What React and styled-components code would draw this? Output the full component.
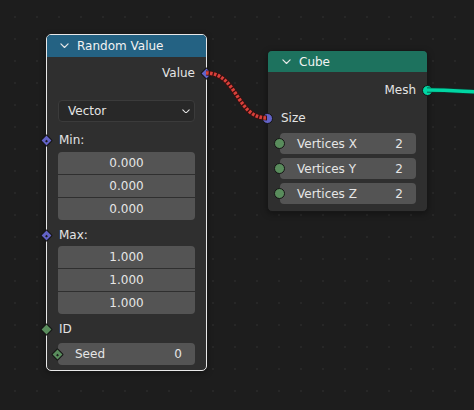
import React from "react";
import styled, { createGlobalStyle } from "styled-components";

const GlobalStyle = createGlobalStyle`
  html, body {
    margin: 0;
    padding: 0;
    background: #1d1d1d;
  }
  body {
    font-family: "DejaVu Sans", "Liberation Sans", sans-serif;
  }
`;

const Canvas = styled.div`
  position: relative;
  width: 474px;
  height: 410px;
  overflow: hidden;
  background-color: #1d1d1d;
  background-image: radial-gradient(circle, #272727 0.9px, transparent 1.4px);
  background-size: 22px 22px;
  background-position: 4px 6px;
`;

const Links = styled.svg`
  position: absolute;
  left: 0;
  top: 0;
  width: 474px;
  height: 410px;
  pointer-events: none;
`;

const Node = styled.div`
  position: absolute;
  left: ${p => p.x}px;
  top: ${p => p.y}px;
  width: ${p => p.w}px;
  box-sizing: border-box;
  background: #2f2f2f;
  border: 1px solid ${p => (p.selected ? "#e8e8e8" : "#171717")};
  border-radius: 5px;
  color: #e4e4e4;
  font-size: 12px;
  box-shadow: 0 2px 6px rgba(0, 0, 0, 0.35);
`;

const Header = styled.div`
  height: ${p => p.h}px;
  background: ${p => p.color};
  border-radius: 4px 4px 0 0;
  display: flex;
  align-items: center;
  padding-left: ${p => p.pad}px;
  gap: 8px;
  color: #f2f2f2;
  font-size: 12px;
`;

const Body = styled.div`
  display: flex;
  flex-direction: column;
  padding: ${p => p.top}px 0 ${p => p.bottom}px;
`;

const Row = styled.div`
  position: relative;
  height: 20px;
  display: flex;
  align-items: center;
  justify-content: ${p => (p.out ? "flex-end" : "flex-start")};
  padding: 0 11px 0 ${p => p.padLeft || 12}px;
  margin-top: ${p => p.mt || 0}px;
`;

const FieldRow = styled.div`
  position: relative;
  display: flex;
  margin: ${p => p.mt || 0}px 11px 0 ${p => p.ml || 11}px;
`;

const Socket = styled.span`
  position: absolute;
  top: 50%;
  ${p => (p.out ? "right: -5px;" : "left: -6px;")}
  width: ${p => (p.round ? 11 : 9)}px;
  height: ${p => (p.round ? 11 : 9)}px;
  margin-top: ${p => (p.round ? -5.5 : -4.5)}px;
  ${p => (p.out ? "margin-right: " + (p.round ? -0.5 : 0.5) + "px;" : "margin-left: " + (p.round ? -0.5 : 0.5) + "px;")}
  box-sizing: border-box;
  background: ${p => p.color};
  border: 1px solid #141414;
  border-radius: ${p => (p.round ? "50%" : "1px")};
  transform: ${p => (p.round ? "none" : "rotate(45deg)")};
  display: flex;
  align-items: center;
  justify-content: center;
  &::after {
    content: "";
    display: ${p => (p.dot ? "block" : "none")};
    width: 2px;
    height: 2px;
    background: #1c1c1c;
  }
`;

const Dropdown = styled.div`
  height: 22px;
  margin: 17px 11px 0 11px;
  box-sizing: border-box;
  background: #282828;
  border: 1px solid #3b3b3b;
  border-radius: 4px;
  display: flex;
  align-items: center;
  justify-content: space-between;
  padding: 0 4px 0 9px;
`;

const FieldGroup = styled.div`
  display: flex;
  flex-direction: column;
  gap: 1px;
  margin: ${p => p.mt}px 11px 0 11px;
`;

const Field = styled.div`
  flex-grow: 1;
  flex-shrink: 0;
  height: ${p => p.h || 21}px;
  background: #545454;
  border-radius: ${p => p.radius || "4px"};
  display: flex;
  align-items: center;
  justify-content: ${p => (p.center ? "center" : "space-between")};
  padding: 0 ${p => (p.center ? 0 : 13)}px 0 ${p => (p.center ? 0 : 17)}px;
  color: #e6e6e6;
`;

const Chevron = ({ size = 9, color = "#e8e8e8" }) => (
  <svg width={size} height={size * 0.6} viewBox="0 0 10 6">
    <polyline points="1,1 5,5 9,1" fill="none" stroke={color} strokeWidth="1.3" strokeLinecap="round" strokeLinejoin="round" />
  </svg>
);

const groupRadius = (i, n) =>
  i === 0 ? "4px 4px 0 0" : i === n - 1 ? "0 0 4px 4px" : "0";

const VectorFields = ({ values, mt }) => (
  <FieldGroup mt={mt}>
    {values.map((v, i) => (
      <Field key={i} center h={22} radius={groupRadius(i, values.length)}>
        {v}
      </Field>
    ))}
  </FieldGroup>
);

const VECTOR = "#6363c7";
const INT = "#598c5c";
const GEO = "#00d6a3";

export default function App() {
  return (
    <>
      <GlobalStyle />
      <Canvas>
        <Node x={46} y={34} w={161} selected>
          <Header color="#246283" h={22} pad={13}>
            <Chevron />
            <span>Random Value</span>
          </Header>
          <Body top={6} bottom={5}>
            <Row out>
              Value
              <Socket out color={VECTOR} />
            </Row>
            <Dropdown>
              <span>Vector</span>
              <Chevron size={8} />
            </Dropdown>
            <Row mt={8}>
              <Socket color={VECTOR} dot />
              Min:
            </Row>
            <VectorFields values={["0.000", "0.000", "0.000"]} mt={2} />
            <Row mt={5}>
              <Socket color={VECTOR} dot />
              Max:
            </Row>
            <VectorFields values={["1.000", "1.000", "1.000"]} mt={1} />
            <Row mt={5}>
              <Socket color={INT} />
              ID
            </Row>
            <FieldRow mt={4}>
              <Socket color={INT} dot />
              <Field h={22}>
                <span>Seed</span>
                <span>0</span>
              </Field>
            </FieldRow>
          </Body>
        </Node>

        <Node x={267} y={50} w={161}>
          <Header color="#1d725e" h={21} pad={14}>
            <Chevron />
            <span>Cube</span>
          </Header>
          <Body top={8} bottom={7}>
            <Row out>
              Mesh
              <Socket out round color={GEO} />
            </Row>
            <Row mt={8} padLeft={13}>
              <Socket round color={VECTOR} />
              Size
            </Row>
            {["Vertices X", "Vertices Y", "Vertices Z"].map((label, i) => (
              <FieldRow key={label} mt={i === 0 ? 5 : 4} ml={12}>
                <Socket round color={INT} />
                <Field>
                  <span>{label}</span>
                  <span>2</span>
                </Field>
              </FieldRow>
            ))}
          </Body>
        </Node>

        <Links viewBox="0 0 474 410">
          <path d="M206,73 C238,73 236,118 267,118" fill="none" stroke="#3a1010" strokeWidth="5" />
          <path d="M206,73 C238,73 236,118 267,118" fill="none" stroke="#d8403a" strokeWidth="3.5" strokeDasharray="2.6 1.4" />
          <path d="M427,90 C450,90 458,91 480,92" fill="none" stroke="#0b3a30" strokeWidth="5" />
          <path d="M427,90 C450,90 458,91 480,92" fill="none" stroke="#00d6a3" strokeWidth="3.5" />
        </Links>
      </Canvas>
    </>
  );
}
